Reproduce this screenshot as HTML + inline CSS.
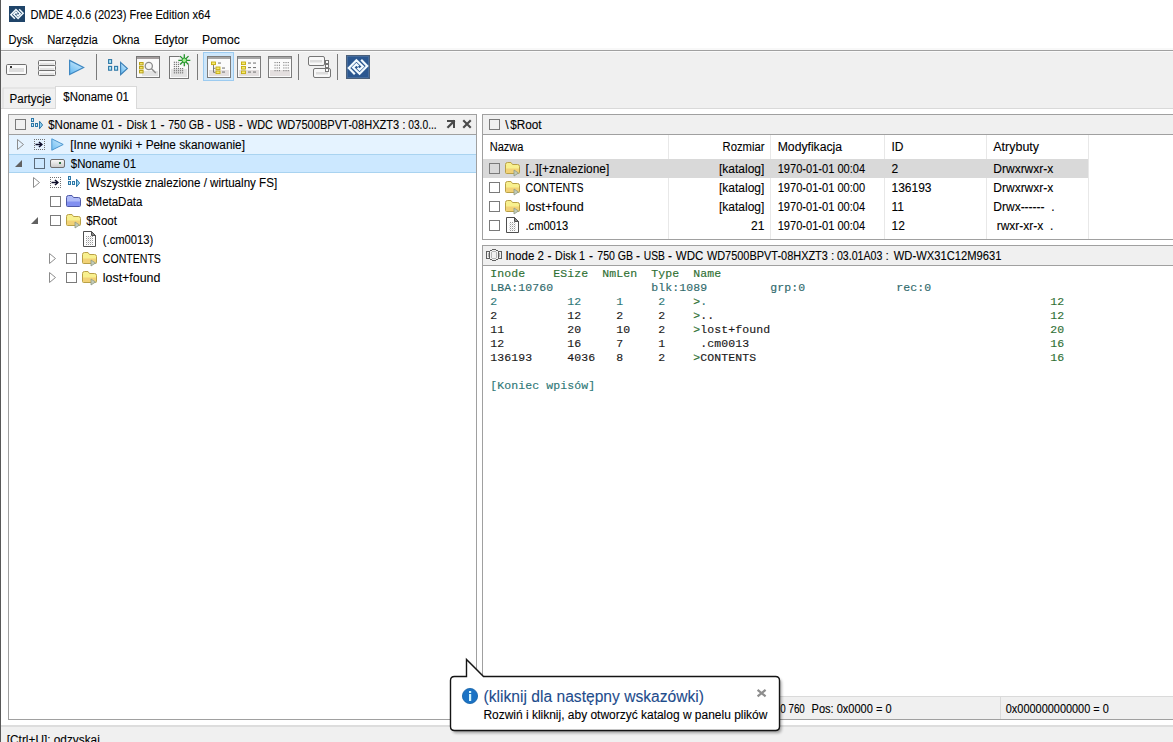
<!DOCTYPE html>
<html><head><meta charset="utf-8"><title>DMDE</title>
<style>html,body{margin:0;padding:0;background:#fff;overflow:hidden;width:1173px;height:742px}
</style></head>
<body><svg width="1173" height="742" viewBox="0 0 1173 742" style="display:block"><rect x="0" y="0" width="1173" height="742" fill="#ffffff" /><defs><pattern id="chk" x="0" y="0" width="2" height="2" patternUnits="userSpaceOnUse"><rect x="0" y="0" width="1" height="1" fill="#9a9a9a"/><rect x="1" y="1" width="1" height="1" fill="#dedede"/></pattern></defs><g transform="translate(9,6) scale(0.6666666666666666)"><rect x="0" y="0" width="24" height="24" fill="#1f4469"/><path d="M8.8,19.2 L2.8,13 L10.4,5.2 L16.9,11.5 L13.6,14.8 L11.5,12.7" fill="none" stroke="#f2faff" stroke-width="2.3"/><path d="M15.2,4.8 L21.2,11 L13.6,18.8 L7.1,12.5 L10.4,9.2 L12.5,11.3" fill="none" stroke="#f2faff" stroke-width="2.3"/></g><text x="30.5" y="19" font-family="Liberation Sans, sans-serif" font-size="12" fill="#000" stroke="#000" stroke-width="0.1" textLength="180" lengthAdjust="spacingAndGlyphs" >DMDE 4.0.6 (2023) Free Edition x64</text><text x="8.5" y="44" font-family="Liberation Sans, sans-serif" font-size="12" fill="#000" stroke="#000" stroke-width="0.1" textLength="24.5" lengthAdjust="spacingAndGlyphs" >Dysk</text><text x="47.3" y="44" font-family="Liberation Sans, sans-serif" font-size="12" fill="#000" stroke="#000" stroke-width="0.1" textLength="50.3" lengthAdjust="spacingAndGlyphs" >Narzędzia</text><text x="112.5" y="44" font-family="Liberation Sans, sans-serif" font-size="12" fill="#000" stroke="#000" stroke-width="0.1" textLength="27.1" lengthAdjust="spacingAndGlyphs" >Okna</text><text x="154.5" y="44" font-family="Liberation Sans, sans-serif" font-size="12" fill="#000" stroke="#000" stroke-width="0.1" textLength="33.5" lengthAdjust="spacingAndGlyphs" >Edytor</text><text x="202" y="44" font-family="Liberation Sans, sans-serif" font-size="12" fill="#000" stroke="#000" stroke-width="0.1" textLength="37.8" lengthAdjust="spacingAndGlyphs" >Pomoc</text><rect x="1" y="51" width="1173" height="58" fill="#f0f0f0" /><rect x="1" y="48" width="1173" height="2" fill="#f8f8f8" /><rect x="1" y="50" width="1172" height="1" fill="#a0a0a0" /><rect x="1" y="51" width="1172" height="1" fill="#fafafa" /><rect x="6.5" y="64.5" width="20" height="10" rx="1.2" fill="#fafafa" stroke="#6f6f6f" stroke-width="1"/><rect x="9" y="68" width="15" height="4" fill="#dddddd"/><rect x="10" y="66" width="2" height="2" fill="#333"/><rect x="38.5" y="60.5" width="17" height="5" rx="1" fill="#f7f7f7" stroke="#6f6f6f" stroke-width="1"/><rect x="40" y="63.0" width="14" height="2" fill="#e2e2e2"/><rect x="38.5" y="65.5" width="17" height="5" rx="1" fill="#f7f7f7" stroke="#6f6f6f" stroke-width="1"/><rect x="40" y="68.0" width="14" height="2" fill="#e2e2e2"/><rect x="38.5" y="70.5" width="17" height="5" rx="1" fill="#f7f7f7" stroke="#6f6f6f" stroke-width="1"/><rect x="40" y="73.0" width="14" height="2" fill="#e2e2e2"/><defs><linearGradient id="tbp" x1="0" y1="1" x2="0.6" y2="0"><stop offset="0" stop-color="#5ab4f0"/><stop offset="1" stop-color="#cdeafc"/></linearGradient></defs><path d="M69.6,60.4 L83.6,67.5 L69.6,74.6 Z" fill="url(#tbp)" stroke="#3f88c2" stroke-width="1.2"/><rect x="96" y="54" width="1" height="26" fill="#7a7a7a"/><rect x="197" y="54" width="1" height="26" fill="#7a7a7a"/><rect x="298" y="54" width="1" height="26" fill="#7a7a7a"/><rect x="337" y="54" width="1" height="26" fill="#7a7a7a"/><g fill="#b4eafa" stroke="#2f77a6" stroke-width="1.1"><rect x="108.6" y="59.6" width="3" height="3.8"/><rect x="108.6" y="66.4" width="3" height="3.8"/><rect x="114.6" y="66.4" width="3" height="3.8"/></g><defs><linearGradient id="tbp2" x1="0" y1="1" x2="0.6" y2="0"><stop offset="0" stop-color="#5ab4f0"/><stop offset="1" stop-color="#cdeafc"/></linearGradient></defs><path d="M120.6,62.3 L127.4,68.5 L120.6,74.7 Z" fill="url(#tbp2)" stroke="#3a7fb6" stroke-width="1.1"/><rect x="136.5" y="56.5" width="23" height="21" fill="#fafafa" stroke="#767676" stroke-width="1"/><rect x="137" y="57" width="22" height="2" fill="#a49e9e"/><rect x="142" y="71" width="16" height="5" fill="#e2e2e2"/><rect x="139.5" y="62.5" width="3.6" height="2.4" fill="#f3e46a" stroke="#b9a21a" stroke-width="1"/><rect x="139.5" y="66.5" width="3.6" height="2.4" fill="#f3e46a" stroke="#b9a21a" stroke-width="1"/><rect x="139.5" y="70.5" width="3.6" height="2.4" fill="#f3e46a" stroke="#b9a21a" stroke-width="1"/><circle cx="148.8" cy="66" r="3.6" fill="#f6f6f6" stroke="#8c8c8c" stroke-width="1.3"/><path d="M151.5,68.8 L155.8,73" stroke="#8c8c8c" stroke-width="1.5"/><rect x="169.5" y="56.5" width="19" height="22" fill="#fafafa" stroke="#767676" stroke-width="1"/><rect x="171" y="69" width="16" height="8" fill="#e2e2e2"/><rect x="173.8" y="61.7" width="1.2" height="1.2" fill="#7a7a7a"/><rect x="175.85000000000002" y="61.7" width="1.2" height="1.2" fill="#7a7a7a"/><rect x="177.9" y="61.7" width="1.2" height="1.2" fill="#7a7a7a"/><rect x="173.8" y="63.800000000000004" width="1.2" height="1.2" fill="#7a7a7a"/><rect x="175.85000000000002" y="63.800000000000004" width="1.2" height="1.2" fill="#7a7a7a"/><rect x="177.9" y="63.800000000000004" width="1.2" height="1.2" fill="#7a7a7a"/><rect x="173.8" y="65.9" width="1.2" height="1.2" fill="#7a7a7a"/><rect x="175.85000000000002" y="65.9" width="1.2" height="1.2" fill="#7a7a7a"/><rect x="177.9" y="65.9" width="1.2" height="1.2" fill="#7a7a7a"/><rect x="173.8" y="68.0" width="1.2" height="1.2" fill="#7a7a7a"/><rect x="175.85000000000002" y="68.0" width="1.2" height="1.2" fill="#7a7a7a"/><rect x="177.9" y="68.0" width="1.2" height="1.2" fill="#7a7a7a"/><rect x="179.95000000000002" y="68.0" width="1.2" height="1.2" fill="#7a7a7a"/><rect x="182.0" y="68.0" width="1.2" height="1.2" fill="#7a7a7a"/><rect x="173.8" y="70.10000000000001" width="1.2" height="1.2" fill="#7a7a7a"/><rect x="175.85000000000002" y="70.10000000000001" width="1.2" height="1.2" fill="#7a7a7a"/><rect x="177.9" y="70.10000000000001" width="1.2" height="1.2" fill="#7a7a7a"/><rect x="179.95000000000002" y="70.10000000000001" width="1.2" height="1.2" fill="#7a7a7a"/><rect x="182.0" y="70.10000000000001" width="1.2" height="1.2" fill="#7a7a7a"/><rect x="173.8" y="72.2" width="1.2" height="1.2" fill="#7a7a7a"/><rect x="175.85000000000002" y="72.2" width="1.2" height="1.2" fill="#7a7a7a"/><rect x="177.9" y="72.2" width="1.2" height="1.2" fill="#7a7a7a"/><rect x="179.95000000000002" y="72.2" width="1.2" height="1.2" fill="#7a7a7a"/><rect x="182.0" y="72.2" width="1.2" height="1.2" fill="#7a7a7a"/><circle cx="184.3" cy="60.3" r="6" fill="#f0f0f0"/><g stroke="#22922a" stroke-width="1.3"><path d="M184.3,54.3 L184.3,66.3 M178.3,60.3 L190.3,60.3 M180.1,56.1 L188.5,64.5 M188.5,56.1 L180.1,64.5"/></g><circle cx="184.3" cy="60.3" r="2.3" fill="#9ef08c" stroke="#22922a" stroke-width="0.9"/><rect x="203.5" y="52.5" width="30" height="28" fill="#cde6fa" stroke="#9ccbf0" stroke-width="1"/><rect x="207.5" y="56.5" width="23" height="21" fill="#fbfbfb" stroke="#7c7c7c" stroke-width="1"/><rect x="208" y="57" width="22" height="2" fill="#a6a6a6"/><rect x="209" y="70" width="20" height="6" fill="#e4dfdf"/><path d="M213.5,65 L213.5,72.3 L215.5,72.3 M213.5,68.3 L215.5,68.3" stroke="#606060" stroke-width="0.8" fill="none"/><rect x="211.5" y="62.0" width="4" height="2.6" fill="#f6ea6a" stroke="#c4aa10" stroke-width="0.9"/><rect x="216.0" y="67.0" width="4" height="2.6" fill="#f6ea6a" stroke="#c4aa10" stroke-width="0.9"/><rect x="216.0" y="71.0" width="4" height="2.6" fill="#f6ea6a" stroke="#c4aa10" stroke-width="0.9"/><rect x="218" y="62.5" width="3" height="1.1" fill="#7a7a7a"/><rect x="222" y="67.5" width="3" height="1.1" fill="#7a7a7a"/><rect x="222" y="71.5" width="3" height="1.1" fill="#7a7a7a"/><rect x="237.5" y="56.5" width="23" height="21" fill="#fbfbfb" stroke="#7c7c7c" stroke-width="1"/><rect x="238" y="57" width="22" height="2" fill="#a6a6a6"/><rect x="239" y="70" width="20" height="6" fill="#e4dfdf"/><rect x="241.5" y="62.0" width="4" height="2.6" fill="#f6ea6a" stroke="#c4aa10" stroke-width="0.9"/><rect x="248" y="62.5" width="3" height="1.1" fill="#7a7a7a"/><rect x="253" y="62.5" width="3" height="1.1" fill="#7a7a7a"/><rect x="241.5" y="66.5" width="4" height="2.6" fill="#f6ea6a" stroke="#c4aa10" stroke-width="0.9"/><rect x="248" y="67" width="3" height="1.1" fill="#7a7a7a"/><rect x="253" y="67" width="3" height="1.1" fill="#7a7a7a"/><rect x="241.5" y="71.0" width="4" height="2.6" fill="#f6ea6a" stroke="#c4aa10" stroke-width="0.9"/><rect x="248" y="71.5" width="3" height="1.1" fill="#7a7a7a"/><rect x="253" y="71.5" width="3" height="1.1" fill="#7a7a7a"/><rect x="268.5" y="56.5" width="23" height="21" fill="#fbfbfb" stroke="#7c7c7c" stroke-width="1"/><rect x="269" y="57" width="22" height="2" fill="#a6a6a6"/><rect x="270" y="70" width="20" height="6" fill="#e4dfdf"/><rect x="274.5" y="62.0" width="1.1" height="1.1" fill="#7f7f7f"/><rect x="276.7" y="62.0" width="1.1" height="1.1" fill="#7f7f7f"/><rect x="278.9" y="62.0" width="1.1" height="1.1" fill="#7f7f7f"/><rect x="283.3" y="62.0" width="1.1" height="1.1" fill="#7f7f7f"/><rect x="285.5" y="62.0" width="1.1" height="1.1" fill="#7f7f7f"/><rect x="287.7" y="62.0" width="1.1" height="1.1" fill="#7f7f7f"/><rect x="274.5" y="64.7" width="1.1" height="1.1" fill="#7f7f7f"/><rect x="276.7" y="64.7" width="1.1" height="1.1" fill="#7f7f7f"/><rect x="278.9" y="64.7" width="1.1" height="1.1" fill="#7f7f7f"/><rect x="283.3" y="64.7" width="1.1" height="1.1" fill="#7f7f7f"/><rect x="285.5" y="64.7" width="1.1" height="1.1" fill="#7f7f7f"/><rect x="287.7" y="64.7" width="1.1" height="1.1" fill="#7f7f7f"/><rect x="274.5" y="67.4" width="1.1" height="1.1" fill="#7f7f7f"/><rect x="276.7" y="67.4" width="1.1" height="1.1" fill="#7f7f7f"/><rect x="278.9" y="67.4" width="1.1" height="1.1" fill="#7f7f7f"/><rect x="283.3" y="67.4" width="1.1" height="1.1" fill="#7f7f7f"/><rect x="285.5" y="67.4" width="1.1" height="1.1" fill="#7f7f7f"/><rect x="287.7" y="67.4" width="1.1" height="1.1" fill="#7f7f7f"/><rect x="274.5" y="70.1" width="1.1" height="1.1" fill="#7f7f7f"/><rect x="276.7" y="70.1" width="1.1" height="1.1" fill="#7f7f7f"/><rect x="278.9" y="70.1" width="1.1" height="1.1" fill="#7f7f7f"/><rect x="283.3" y="70.1" width="1.1" height="1.1" fill="#7f7f7f"/><rect x="285.5" y="70.1" width="1.1" height="1.1" fill="#7f7f7f"/><rect x="287.7" y="70.1" width="1.1" height="1.1" fill="#7f7f7f"/><rect x="308.5" y="56.5" width="16" height="9" rx="1.5" fill="#f8f8f8" stroke="#767676" stroke-width="1"/><rect x="310" y="60" width="12" height="2.5" fill="#dcdcdc"/><rect x="313.5" y="68.5" width="17" height="9" rx="1.5" fill="#f8f8f8" stroke="#767676" stroke-width="1"/><rect x="316" y="72" width="12" height="2.5" fill="#dcdcdc"/><rect x="325.5" y="60.5" width="3" height="3" fill="#fff" stroke="#767676" stroke-width="1"/><rect x="325.5" y="64.5" width="3" height="3" fill="#fff" stroke="#767676" stroke-width="1"/><rect x="325.5" y="68.5" width="3" height="3" fill="#fff" stroke="#767676" stroke-width="1"/><g transform="translate(346,55) scale(1.0)"><rect x="0.5" y="0.5" width="23" height="23" fill="#2b5790" stroke="#4a5f7a" stroke-width="1"/><rect x="1.5" y="1.5" width="21" height="21" fill="none" stroke="#5f80a8" stroke-width="0.5"/><path d="M8.8,19.2 L2.8,13 L10.4,5.2 L16.9,11.5 L13.6,14.8 L11.5,12.7" fill="none" stroke="#f2faff" stroke-width="2.2"/><path d="M15.2,4.8 L21.2,11 L13.6,18.8 L7.1,12.5 L10.4,9.2 L12.5,11.3" fill="none" stroke="#f2faff" stroke-width="2.2"/></g><rect x="3" y="88" width="53" height="21" fill="#f0f0f0" stroke="#d9d9d9" stroke-width="1"/><rect x="1" y="108" width="1172" height="1" fill="#d9d9d9" /><rect x="55.5" y="86.5" width="81" height="24" fill="#ffffff" stroke="#d9d9d9" stroke-width="1"/><rect x="56" y="108" width="80" height="3" fill="#ffffff" /><text x="9.5" y="103" font-family="Liberation Sans, sans-serif" font-size="12" fill="#000" stroke="#000" stroke-width="0.1" textLength="41.8" lengthAdjust="spacingAndGlyphs" >Partycje</text><text x="63.3" y="101" font-family="Liberation Sans, sans-serif" font-size="12" fill="#000" stroke="#000" stroke-width="0.1" textLength="65.6" lengthAdjust="spacingAndGlyphs" >$Noname 01</text><rect x="1" y="109" width="1173" height="616" fill="#ffffff" /><rect x="8.5" y="114.5" width="468" height="605" fill="#ffffff" stroke="#a0a0a0" stroke-width="1"/><rect x="9" y="115" width="467" height="19" fill="#f0f0f0" /><rect x="9" y="134" width="467" height="1" fill="#a0a0a0" /><rect x="15.5" y="119.5" width="10" height="10" fill="none" stroke="#7a7a7a" stroke-width="1"/><g transform="translate(31,118) scale(1.0)" fill="#c6ecfb" stroke="#2f77a6" stroke-width="1"><rect x="0.5" y="0.5" width="2" height="3"/><rect x="0.5" y="5.5" width="2" height="3"/><rect x="4.5" y="5.5" width="2" height="3"/><path d="M8.5,3.2 L11.6,7 L8.5,10.8 Z" fill="#8fd0f0"/></g><text x="48.2" y="129" font-family="Liberation Sans, sans-serif" font-size="12" fill="#000" stroke="#000" stroke-width="0.1" textLength="65.9" lengthAdjust="spacingAndGlyphs" >$Noname 01</text><text x="118.1" y="129" font-family="Liberation Sans, sans-serif" font-size="12" fill="#000" stroke="#000" stroke-width="0.1" >-</text><text x="126.4" y="129" font-family="Liberation Sans, sans-serif" font-size="12" fill="#000" stroke="#000" stroke-width="0.1" textLength="29.9" lengthAdjust="spacingAndGlyphs" >Disk 1</text><text x="160.6" y="129" font-family="Liberation Sans, sans-serif" font-size="12" fill="#000" stroke="#000" stroke-width="0.1" >-</text><text x="168.2" y="129" font-family="Liberation Sans, sans-serif" font-size="12" fill="#000" stroke="#000" stroke-width="0.1" textLength="35.8" lengthAdjust="spacingAndGlyphs" >750 GB</text><text x="207.0" y="129" font-family="Liberation Sans, sans-serif" font-size="12" fill="#000" stroke="#000" stroke-width="0.1" >-</text><text x="215.0" y="129" font-family="Liberation Sans, sans-serif" font-size="12" fill="#000" stroke="#000" stroke-width="0.1" textLength="20.4" lengthAdjust="spacingAndGlyphs" >USB</text><text x="238.8" y="129" font-family="Liberation Sans, sans-serif" font-size="12" fill="#000" stroke="#000" stroke-width="0.1" >-</text><text x="246.9" y="129" font-family="Liberation Sans, sans-serif" font-size="12" fill="#000" stroke="#000" stroke-width="0.1" textLength="26.1" lengthAdjust="spacingAndGlyphs" >WDC</text><text x="276.9" y="129" font-family="Liberation Sans, sans-serif" font-size="12" fill="#000" stroke="#000" stroke-width="0.1" textLength="122.3" lengthAdjust="spacingAndGlyphs" >WD7500BPVT-08HXZT3</text><text x="402.2" y="129" font-family="Liberation Sans, sans-serif" font-size="12" fill="#000" stroke="#000" stroke-width="0.1" >:</text><text x="408.2" y="129" font-family="Liberation Sans, sans-serif" font-size="12" fill="#000" stroke="#000" stroke-width="0.1" textLength="28.5" lengthAdjust="spacingAndGlyphs" >03.0...</text><path d="M447,121 L455,121 M454,120 L454,128" fill="none" stroke="#4a4a4a" stroke-width="2"/><path d="M448.2,127 L453.8,121.4" fill="none" stroke="#4a4a4a" stroke-width="2.2" stroke-linecap="square"/><path d="M464,121 L470,127 M470,121 L464,127" fill="none" stroke="#4a4a4a" stroke-width="2.1" stroke-linecap="square"/><rect x="9" y="135" width="467" height="19" fill="#e5f3ff" /><rect x="9" y="154" width="467" height="19" fill="#cce8ff" /><rect x="9" y="154" width="467" height="1" fill="#a9d3f0" /><rect x="9" y="172" width="467" height="1" fill="#a9d3f0" /><path d="M17.5,139.5 L23.5,144.5 L17.5,149.5 Z" fill="none" stroke="#8c8c8c" stroke-width="1"/><path d="M34,139h1v1h-1zM34,149h1v1h-1zM34,139h1v1h-1zM44,139h1v1h-1zM36,139h1v1h-1zM36,149h1v1h-1zM34,141h1v1h-1zM44,141h1v1h-1zM38,139h1v1h-1zM38,149h1v1h-1zM34,143h1v1h-1zM44,143h1v1h-1zM40,139h1v1h-1zM40,149h1v1h-1zM34,145h1v1h-1zM44,145h1v1h-1zM42,139h1v1h-1zM42,149h1v1h-1zM34,147h1v1h-1zM44,147h1v1h-1zM44,139h1v1h-1zM44,149h1v1h-1zM34,149h1v1h-1zM44,149h1v1h-1z" fill="#707070"/><path d="M35.5,144.5 L41.5,144.5" stroke="#0c0c28" stroke-width="1.5"/><path d="M39,142 L41.8,144.5 L39,147" fill="none" stroke="#0c0c28" stroke-width="1.6"/><defs><linearGradient id="pg51_138" x1="0" y1="1" x2="1" y2="0"><stop offset="0" stop-color="#6cbcf2"/><stop offset="1" stop-color="#d6effd"/></linearGradient></defs><path d="M51.8,138.8 L63.2,144.5 L51.8,150.2 Z" fill="url(#pg51_138)" stroke="#4b96d0" stroke-width="1" stroke-linejoin="miter"/><text x="70.3" y="149" font-family="Liberation Sans, sans-serif" font-size="12" fill="#000" stroke="#000" stroke-width="0.1" textLength="174.7" lengthAdjust="spacingAndGlyphs" >[Inne wyniki + Pełne skanowanie]</text><path d="M22,160 L22,167 L15,167 Z" fill="#616161"/><rect x="34.5" y="158.5" width="10" height="10" fill="none" stroke="#5c6b7a" stroke-width="1"/><defs><linearGradient id="dg50_159" x1="0" y1="0" x2="0" y2="1"><stop offset="0" stop-color="#fbfbfb"/><stop offset="1" stop-color="#c9c9c9"/></linearGradient></defs><rect x="50.5" y="159.5" width="14" height="8" rx="1.5" fill="url(#dg50_159)" stroke="#6e6e6e" stroke-width="1"/><rect x="59" y="162" width="2" height="2" fill="#347444"/><text x="70.8" y="168" font-family="Liberation Sans, sans-serif" font-size="12" fill="#000" stroke="#000" stroke-width="0.1" textLength="65.2" lengthAdjust="spacingAndGlyphs" >$Noname 01</text><path d="M33.5,177.5 L39.5,182.5 L33.5,187.5 Z" fill="none" stroke="#8c8c8c" stroke-width="1"/><path d="M50,177h1v1h-1zM50,187h1v1h-1zM50,177h1v1h-1zM60,177h1v1h-1zM52,177h1v1h-1zM52,187h1v1h-1zM50,179h1v1h-1zM60,179h1v1h-1zM54,177h1v1h-1zM54,187h1v1h-1zM50,181h1v1h-1zM60,181h1v1h-1zM56,177h1v1h-1zM56,187h1v1h-1zM50,183h1v1h-1zM60,183h1v1h-1zM58,177h1v1h-1zM58,187h1v1h-1zM50,185h1v1h-1zM60,185h1v1h-1zM60,177h1v1h-1zM60,187h1v1h-1zM50,187h1v1h-1zM60,187h1v1h-1z" fill="#707070"/><path d="M51.5,182.5 L57.5,182.5" stroke="#0c0c28" stroke-width="1.5"/><path d="M55,180 L57.8,182.5 L55,185" fill="none" stroke="#0c0c28" stroke-width="1.6"/><g transform="translate(68,176) scale(1.0)" fill="#c6ecfb" stroke="#2f77a6" stroke-width="1"><rect x="0.5" y="0.5" width="2" height="3"/><rect x="0.5" y="5.5" width="2" height="3"/><rect x="4.5" y="5.5" width="2" height="3"/><path d="M8.5,3.2 L11.6,7 L8.5,10.8 Z" fill="#8fd0f0"/></g><text x="86.2" y="187" font-family="Liberation Sans, sans-serif" font-size="12" fill="#000" stroke="#000" stroke-width="0.1" textLength="191" lengthAdjust="spacingAndGlyphs" >[Wszystkie znalezione / wirtualny FS]</text><rect x="50.5" y="196.5" width="10" height="10" fill="none" stroke="#7a7a7a" stroke-width="1"/><path d="M66.5,197.5 Q66.5,195.5 68.5,195.5 L72,195.5 L73.5,197.5 L78.5,197.5 Q80.5,197.5 80.5,199.5 L80.5,205.5 Q80.5,206.5 79.5,206.5 L67.5,206.5 Q66.5,206.5 66.5,205.5 Z" fill="#b0bcf8" stroke="#4e58a8" stroke-width="1"/><rect x="67" y="201.5" width="13" height="4.5" fill="#8290f0"/><text x="86.2" y="206" font-family="Liberation Sans, sans-serif" font-size="12" fill="#000" stroke="#000" stroke-width="0.1" textLength="56.2" lengthAdjust="spacingAndGlyphs" >$MetaData</text><path d="M38,217 L38,224 L31,224 Z" fill="#616161"/><rect x="50.5" y="215.5" width="10" height="10" fill="none" stroke="#7a7a7a" stroke-width="1"/><path d="M66.5,216.5 Q66.5,214.5 68.5,214.5 L72,214.5 L73.5,216.5 L78.5,216.5 Q80.5,216.5 80.5,218.5 L80.5,224.5 Q80.5,225.5 79.5,225.5 L67.5,225.5 Q66.5,225.5 66.5,224.5 Z" fill="#f8f08e" stroke="#b9a046" stroke-width="1"/><rect x="67" y="220.5" width="13" height="4.5" fill="#f2d276"/><path d="M75,222 L79.5,225 L75,228 Z" fill="#c4ccb8" stroke="#8f9a86" stroke-width="0.8"/><text x="86.2" y="225" font-family="Liberation Sans, sans-serif" font-size="12" fill="#000" stroke="#000" stroke-width="0.1" textLength="30.8" lengthAdjust="spacingAndGlyphs" >$Root</text><path d="M83.5,231.5 L91.5,231.5 L95.5,235.5 L95.5,246.5 L83.5,246.5 Z" fill="#fdfdfd" stroke="#4e4e4e" stroke-width="1"/><path d="M91.5,231.5 L91.5,235.5 L95.5,235.5 Z" fill="#8a8a8a" stroke="#4e4e4e" stroke-width="1"/><rect x="86" y="236" width="7" height="9" fill="url(#chk)"/><text x="102.8" y="244" font-family="Liberation Sans, sans-serif" font-size="12" fill="#000" stroke="#000" stroke-width="0.1" textLength="50.5" lengthAdjust="spacingAndGlyphs" >(.cm0013)</text><path d="M49.5,253.5 L55.5,258.5 L49.5,263.5 Z" fill="none" stroke="#8c8c8c" stroke-width="1"/><rect x="66.5" y="253.5" width="10" height="10" fill="none" stroke="#7a7a7a" stroke-width="1"/><path d="M82.5,254.5 Q82.5,252.5 84.5,252.5 L88,252.5 L89.5,254.5 L94.5,254.5 Q96.5,254.5 96.5,256.5 L96.5,262.5 Q96.5,263.5 95.5,263.5 L83.5,263.5 Q82.5,263.5 82.5,262.5 Z" fill="#f8f08e" stroke="#b9a046" stroke-width="1"/><rect x="83" y="258.5" width="13" height="4.5" fill="#f2d276"/><path d="M91,260 L95.5,263 L91,266 Z" fill="#c4ccb8" stroke="#8f9a86" stroke-width="0.8"/><text x="102.8" y="263" font-family="Liberation Sans, sans-serif" font-size="12" fill="#000" stroke="#000" stroke-width="0.1" textLength="58.1" lengthAdjust="spacingAndGlyphs" >CONTENTS</text><path d="M49.5,272.5 L55.5,277.5 L49.5,282.5 Z" fill="none" stroke="#8c8c8c" stroke-width="1"/><rect x="66.5" y="272.5" width="10" height="10" fill="none" stroke="#7a7a7a" stroke-width="1"/><path d="M82.5,273.5 Q82.5,271.5 84.5,271.5 L88,271.5 L89.5,273.5 L94.5,273.5 Q96.5,273.5 96.5,275.5 L96.5,281.5 Q96.5,282.5 95.5,282.5 L83.5,282.5 Q82.5,282.5 82.5,281.5 Z" fill="#f8f08e" stroke="#b9a046" stroke-width="1"/><rect x="83" y="277.5" width="13" height="4.5" fill="#f2d276"/><path d="M91,279 L95.5,282 L91,285 Z" fill="#c4ccb8" stroke="#8f9a86" stroke-width="0.8"/><text x="102.8" y="282" font-family="Liberation Sans, sans-serif" font-size="12" fill="#000" stroke="#000" stroke-width="0.1" textLength="57.6" lengthAdjust="spacingAndGlyphs" >lost+found</text><rect x="482.5" y="114.5" width="693" height="125" fill="#ffffff" stroke="#a0a0a0" stroke-width="1"/><rect x="483" y="115" width="1173" height="19" fill="#f0f0f0" /><rect x="483" y="134" width="690" height="1" fill="#a0a0a0" /><rect x="489.5" y="119.5" width="10" height="10" fill="none" stroke="#7a7a7a" stroke-width="1"/><text x="505.2" y="129" font-family="Liberation Sans, sans-serif" font-size="12" fill="#000" stroke="#000" stroke-width="0.1" >\</text><text x="510.2" y="129" font-family="Liberation Sans, sans-serif" font-size="12" fill="#000" stroke="#000" stroke-width="0.1" textLength="31.4" lengthAdjust="spacingAndGlyphs" >$Root</text><rect x="668" y="135" width="1" height="104" fill="#e8e8e8" /><rect x="770" y="135" width="1" height="104" fill="#e8e8e8" /><rect x="884" y="135" width="1" height="104" fill="#e8e8e8" /><rect x="986" y="135" width="1" height="104" fill="#e8e8e8" /><rect x="1088" y="135" width="1" height="104" fill="#e8e8e8" /><text x="489.7" y="151" font-family="Liberation Sans, sans-serif" font-size="12" fill="#000" stroke="#000" stroke-width="0.1" textLength="33.8" lengthAdjust="spacingAndGlyphs" >Nazwa</text><text x="764.4" y="151" font-family="Liberation Sans, sans-serif" font-size="12" fill="#000" stroke="#000" stroke-width="0.1" textLength="41.9" lengthAdjust="spacingAndGlyphs" text-anchor="end" >Rozmiar</text><text x="777.7" y="151" font-family="Liberation Sans, sans-serif" font-size="12" fill="#000" stroke="#000" stroke-width="0.1" textLength="64.4" lengthAdjust="spacingAndGlyphs" >Modyfikacja</text><text x="891.5" y="151" font-family="Liberation Sans, sans-serif" font-size="12" fill="#000" stroke="#000" stroke-width="0.1" >ID</text><text x="993.3" y="151" font-family="Liberation Sans, sans-serif" font-size="12" fill="#000" stroke="#000" stroke-width="0.1" textLength="45.7" lengthAdjust="spacingAndGlyphs" >Atrybuty</text><rect x="483" y="159" width="605" height="19" fill="#d9d9d9" /><rect x="489.5" y="163.5" width="10" height="10" fill="none" stroke="#7a7a7a" stroke-width="1"/><path d="M505.5,164.5 Q505.5,162.5 507.5,162.5 L511,162.5 L512.5,164.5 L517.5,164.5 Q519.5,164.5 519.5,166.5 L519.5,172.5 Q519.5,173.5 518.5,173.5 L506.5,173.5 Q505.5,173.5 505.5,172.5 Z" fill="#f8f08e" stroke="#b9a046" stroke-width="1"/><rect x="506" y="168.5" width="13" height="4.5" fill="#f2d276"/><path d="M514,170 L518.5,173 L514,176 Z" fill="#c4ccb8" stroke="#8f9a86" stroke-width="0.8"/><text x="525.5" y="173" font-family="Liberation Sans, sans-serif" font-size="12" fill="#000" stroke="#000" stroke-width="0.1" textLength="83.7" lengthAdjust="spacingAndGlyphs" >[..][+znalezione]</text><text x="764.4" y="173" font-family="Liberation Sans, sans-serif" font-size="12" fill="#000" stroke="#000" stroke-width="0.1" text-anchor="end" >[katalog]</text><text x="777.7" y="173" font-family="Liberation Sans, sans-serif" font-size="12" fill="#000" stroke="#000" stroke-width="0.1" textLength="87.4" lengthAdjust="spacingAndGlyphs" >1970-01-01 00:04</text><text x="891.5" y="173" font-family="Liberation Sans, sans-serif" font-size="12" fill="#000" stroke="#000" stroke-width="0.1" >2</text><text x="993.3" y="173" font-family="Liberation Sans, sans-serif" font-size="12" fill="#000" stroke="#000" stroke-width="0.1" xml:space="preserve">Drwxrwxr-x</text><rect x="489.5" y="182.5" width="10" height="10" fill="none" stroke="#7a7a7a" stroke-width="1"/><path d="M505.5,183.5 Q505.5,181.5 507.5,181.5 L511,181.5 L512.5,183.5 L517.5,183.5 Q519.5,183.5 519.5,185.5 L519.5,191.5 Q519.5,192.5 518.5,192.5 L506.5,192.5 Q505.5,192.5 505.5,191.5 Z" fill="#f8f08e" stroke="#b9a046" stroke-width="1"/><rect x="506" y="187.5" width="13" height="4.5" fill="#f2d276"/><path d="M514,189 L518.5,192 L514,195 Z" fill="#c4ccb8" stroke="#8f9a86" stroke-width="0.8"/><text x="525.5" y="192" font-family="Liberation Sans, sans-serif" font-size="12" fill="#000" stroke="#000" stroke-width="0.1" textLength="58.1" lengthAdjust="spacingAndGlyphs" >CONTENTS</text><text x="764.4" y="192" font-family="Liberation Sans, sans-serif" font-size="12" fill="#000" stroke="#000" stroke-width="0.1" text-anchor="end" >[katalog]</text><text x="777.7" y="192" font-family="Liberation Sans, sans-serif" font-size="12" fill="#000" stroke="#000" stroke-width="0.1" textLength="87.4" lengthAdjust="spacingAndGlyphs" >1970-01-01 00:00</text><text x="891.5" y="192" font-family="Liberation Sans, sans-serif" font-size="12" fill="#000" stroke="#000" stroke-width="0.1" >136193</text><text x="993.3" y="192" font-family="Liberation Sans, sans-serif" font-size="12" fill="#000" stroke="#000" stroke-width="0.1" xml:space="preserve">Drwxrwxr-x</text><rect x="489.5" y="201.5" width="10" height="10" fill="none" stroke="#7a7a7a" stroke-width="1"/><path d="M505.5,202.5 Q505.5,200.5 507.5,200.5 L511,200.5 L512.5,202.5 L517.5,202.5 Q519.5,202.5 519.5,204.5 L519.5,210.5 Q519.5,211.5 518.5,211.5 L506.5,211.5 Q505.5,211.5 505.5,210.5 Z" fill="#f8f08e" stroke="#b9a046" stroke-width="1"/><rect x="506" y="206.5" width="13" height="4.5" fill="#f2d276"/><path d="M514,208 L518.5,211 L514,214 Z" fill="#c4ccb8" stroke="#8f9a86" stroke-width="0.8"/><text x="525.5" y="211" font-family="Liberation Sans, sans-serif" font-size="12" fill="#000" stroke="#000" stroke-width="0.1" textLength="58.1" lengthAdjust="spacingAndGlyphs" >lost+found</text><text x="764.4" y="211" font-family="Liberation Sans, sans-serif" font-size="12" fill="#000" stroke="#000" stroke-width="0.1" text-anchor="end" >[katalog]</text><text x="777.7" y="211" font-family="Liberation Sans, sans-serif" font-size="12" fill="#000" stroke="#000" stroke-width="0.1" textLength="87.4" lengthAdjust="spacingAndGlyphs" >1970-01-01 00:04</text><text x="891.5" y="211" font-family="Liberation Sans, sans-serif" font-size="12" fill="#000" stroke="#000" stroke-width="0.1" >11</text><text x="993.3" y="211" font-family="Liberation Sans, sans-serif" font-size="12" fill="#000" stroke="#000" stroke-width="0.1" xml:space="preserve">Drwx------  .</text><rect x="489.5" y="220.5" width="10" height="10" fill="none" stroke="#7a7a7a" stroke-width="1"/><path d="M506.5,217.5 L514.5,217.5 L518.5,221.5 L518.5,232.5 L506.5,232.5 Z" fill="#fdfdfd" stroke="#4e4e4e" stroke-width="1"/><path d="M514.5,217.5 L514.5,221.5 L518.5,221.5 Z" fill="#8a8a8a" stroke="#4e4e4e" stroke-width="1"/><rect x="509" y="222" width="7" height="9" fill="url(#chk)"/><text x="525.5" y="230" font-family="Liberation Sans, sans-serif" font-size="12" fill="#000" stroke="#000" stroke-width="0.1" textLength="42.7" lengthAdjust="spacingAndGlyphs" >.cm0013</text><text x="764.4" y="230" font-family="Liberation Sans, sans-serif" font-size="12" fill="#000" stroke="#000" stroke-width="0.1" text-anchor="end" >21</text><text x="777.7" y="230" font-family="Liberation Sans, sans-serif" font-size="12" fill="#000" stroke="#000" stroke-width="0.1" textLength="87.4" lengthAdjust="spacingAndGlyphs" >1970-01-01 00:04</text><text x="891.5" y="230" font-family="Liberation Sans, sans-serif" font-size="12" fill="#000" stroke="#000" stroke-width="0.1" >12</text><text x="993.3" y="230" font-family="Liberation Sans, sans-serif" font-size="12" fill="#000" stroke="#000" stroke-width="0.1" xml:space="preserve"> rwxr-xr-x  .</text><rect x="482.5" y="245.5" width="693" height="474" fill="#ffffff" stroke="#a0a0a0" stroke-width="1"/><rect x="483" y="246" width="1173" height="19" fill="#f0f0f0" /><rect x="483" y="265" width="690" height="1" fill="#a0a0a0" /><g fill="#5e5e5e"><rect x="486" y="251" width="4" height="1"/><rect x="486" y="258" width="4" height="1"/><rect x="486" y="251" width="1" height="8"/><rect x="489" y="251" width="1" height="8"/><rect x="498" y="251" width="4" height="1"/><rect x="498" y="258" width="4" height="1"/><rect x="498" y="251" width="1" height="8"/><rect x="501" y="251" width="1" height="8"/><rect x="492" y="249" width="4" height="1"/><rect x="492" y="260" width="4" height="1"/><rect x="490" y="250" width="2" height="1"/><rect x="496" y="250" width="2" height="1"/><rect x="490" y="259" width="2" height="1"/><rect x="496" y="259" width="2" height="1"/></g><g fill="#b4b4b4"><rect x="492" y="251" width="4" height="1"/><rect x="492" y="258" width="4" height="1"/><rect x="491" y="252" width="1" height="6"/><rect x="496" y="252" width="1" height="6"/><rect x="488" y="253" width="1" height="4"/><rect x="499" y="253" width="1" height="4"/></g><text x="505.4" y="260" font-family="Liberation Sans, sans-serif" font-size="12" fill="#000" stroke="#000" stroke-width="0.1" textLength="38.6" lengthAdjust="spacingAndGlyphs" >Inode 2</text><text x="547.4" y="260" font-family="Liberation Sans, sans-serif" font-size="12" fill="#000" stroke="#000" stroke-width="0.1" >-</text><text x="555.1" y="260" font-family="Liberation Sans, sans-serif" font-size="12" fill="#000" stroke="#000" stroke-width="0.1" textLength="30.0" lengthAdjust="spacingAndGlyphs" >Disk 1</text><text x="588.9" y="260" font-family="Liberation Sans, sans-serif" font-size="12" fill="#000" stroke="#000" stroke-width="0.1" >-</text><text x="597.3" y="260" font-family="Liberation Sans, sans-serif" font-size="12" fill="#000" stroke="#000" stroke-width="0.1" textLength="35.8" lengthAdjust="spacingAndGlyphs" >750 GB</text><text x="636.1" y="260" font-family="Liberation Sans, sans-serif" font-size="12" fill="#000" stroke="#000" stroke-width="0.1" >-</text><text x="643.8" y="260" font-family="Liberation Sans, sans-serif" font-size="12" fill="#000" stroke="#000" stroke-width="0.1" textLength="21.2" lengthAdjust="spacingAndGlyphs" >USB</text><text x="668.1" y="260" font-family="Liberation Sans, sans-serif" font-size="12" fill="#000" stroke="#000" stroke-width="0.1" >-</text><text x="675.8" y="260" font-family="Liberation Sans, sans-serif" font-size="12" fill="#000" stroke="#000" stroke-width="0.1" textLength="27.6" lengthAdjust="spacingAndGlyphs" >WDC</text><text x="706.9" y="260" font-family="Liberation Sans, sans-serif" font-size="12" fill="#000" stroke="#000" stroke-width="0.1" textLength="121.0" lengthAdjust="spacingAndGlyphs" >WD7500BPVT-08HXZT3</text><text x="830.9" y="260" font-family="Liberation Sans, sans-serif" font-size="12" fill="#000" stroke="#000" stroke-width="0.1" >:</text><text x="836.9" y="260" font-family="Liberation Sans, sans-serif" font-size="12" fill="#000" stroke="#000" stroke-width="0.1" textLength="45.5" lengthAdjust="spacingAndGlyphs" >03.01A03</text><text x="885.6" y="260" font-family="Liberation Sans, sans-serif" font-size="12" fill="#000" stroke="#000" stroke-width="0.1" >:</text><text x="893.8" y="260" font-family="Liberation Sans, sans-serif" font-size="12" fill="#000" stroke="#000" stroke-width="0.1" textLength="107.6" lengthAdjust="spacingAndGlyphs" >WD-WX31C12M9631</text><text x="490.3" y="277" font-family="Liberation Mono, monospace" font-size="11.5" fill="#2f7034" stroke="#2f7034" stroke-width="0.15" letter-spacing="0.1">Inode</text><text x="553.3" y="277" font-family="Liberation Mono, monospace" font-size="11.5" fill="#2f7034" stroke="#2f7034" stroke-width="0.15" letter-spacing="0.1">ESize</text><text x="602.3" y="277" font-family="Liberation Mono, monospace" font-size="11.5" fill="#2f7034" stroke="#2f7034" stroke-width="0.15" letter-spacing="0.1">NmLen</text><text x="651.3" y="277" font-family="Liberation Mono, monospace" font-size="11.5" fill="#2f7034" stroke="#2f7034" stroke-width="0.15" letter-spacing="0.1">Type</text><text x="693.3" y="277" font-family="Liberation Mono, monospace" font-size="11.5" fill="#2f7034" stroke="#2f7034" stroke-width="0.15" letter-spacing="0.1">Name</text><text x="490.3" y="291" font-family="Liberation Mono, monospace" font-size="11.5" fill="#2f6a6c" stroke="#2f6a6c" stroke-width="0.15" letter-spacing="0.1">LBA:10760</text><text x="651.3" y="291" font-family="Liberation Mono, monospace" font-size="11.5" fill="#2f6a6c" stroke="#2f6a6c" stroke-width="0.15" letter-spacing="0.1">blk:1089</text><text x="770.3" y="291" font-family="Liberation Mono, monospace" font-size="11.5" fill="#2f6a6c" stroke="#2f6a6c" stroke-width="0.15" letter-spacing="0.1">grp:0</text><text x="896.3" y="291" font-family="Liberation Mono, monospace" font-size="11.5" fill="#2f6a6c" stroke="#2f6a6c" stroke-width="0.15" letter-spacing="0.1">rec:0</text><text x="490.3" y="305" font-family="Liberation Mono, monospace" font-size="11.5" fill="#2f7878" stroke="#2f7878" stroke-width="0.15" letter-spacing="0.1">2</text><text x="567.3" y="305" font-family="Liberation Mono, monospace" font-size="11.5" fill="#2f7878" stroke="#2f7878" stroke-width="0.15" letter-spacing="0.1">12</text><text x="616.3" y="305" font-family="Liberation Mono, monospace" font-size="11.5" fill="#2f7878" stroke="#2f7878" stroke-width="0.15" letter-spacing="0.1">1</text><text x="658.3" y="305" font-family="Liberation Mono, monospace" font-size="11.5" fill="#2f7878" stroke="#2f7878" stroke-width="0.15" letter-spacing="0.1">2</text><text x="693.3" y="305" font-family="Liberation Mono, monospace" font-size="11.5" fill="#2f7034" stroke="#2f7034" stroke-width="0.15" letter-spacing="0.1">&gt;</text><text x="700.3" y="305" font-family="Liberation Mono, monospace" font-size="11.5" fill="#2f7878" stroke="#2f7878" stroke-width="0.15" letter-spacing="0.1">.</text><text x="1050.3" y="305" font-family="Liberation Mono, monospace" font-size="11.5" fill="#2f7034" stroke="#2f7034" stroke-width="0.15" letter-spacing="0.1">12</text><text x="490.3" y="319" font-family="Liberation Mono, monospace" font-size="11.5" fill="#1a1a1a" stroke="#1a1a1a" stroke-width="0.15" letter-spacing="0.1">2</text><text x="567.3" y="319" font-family="Liberation Mono, monospace" font-size="11.5" fill="#1a1a1a" stroke="#1a1a1a" stroke-width="0.15" letter-spacing="0.1">12</text><text x="616.3" y="319" font-family="Liberation Mono, monospace" font-size="11.5" fill="#1a1a1a" stroke="#1a1a1a" stroke-width="0.15" letter-spacing="0.1">2</text><text x="658.3" y="319" font-family="Liberation Mono, monospace" font-size="11.5" fill="#1a1a1a" stroke="#1a1a1a" stroke-width="0.15" letter-spacing="0.1">2</text><text x="693.3" y="319" font-family="Liberation Mono, monospace" font-size="11.5" fill="#2f7034" stroke="#2f7034" stroke-width="0.15" letter-spacing="0.1">&gt;</text><text x="700.3" y="319" font-family="Liberation Mono, monospace" font-size="11.5" fill="#1a1a1a" stroke="#1a1a1a" stroke-width="0.15" letter-spacing="0.1">..</text><text x="1050.3" y="319" font-family="Liberation Mono, monospace" font-size="11.5" fill="#2f7034" stroke="#2f7034" stroke-width="0.15" letter-spacing="0.1">12</text><text x="490.3" y="333" font-family="Liberation Mono, monospace" font-size="11.5" fill="#1a1a1a" stroke="#1a1a1a" stroke-width="0.15" letter-spacing="0.1">11</text><text x="567.3" y="333" font-family="Liberation Mono, monospace" font-size="11.5" fill="#1a1a1a" stroke="#1a1a1a" stroke-width="0.15" letter-spacing="0.1">20</text><text x="616.3" y="333" font-family="Liberation Mono, monospace" font-size="11.5" fill="#1a1a1a" stroke="#1a1a1a" stroke-width="0.15" letter-spacing="0.1">10</text><text x="658.3" y="333" font-family="Liberation Mono, monospace" font-size="11.5" fill="#1a1a1a" stroke="#1a1a1a" stroke-width="0.15" letter-spacing="0.1">2</text><text x="693.3" y="333" font-family="Liberation Mono, monospace" font-size="11.5" fill="#2f7034" stroke="#2f7034" stroke-width="0.15" letter-spacing="0.1">&gt;</text><text x="700.3" y="333" font-family="Liberation Mono, monospace" font-size="11.5" fill="#1a1a1a" stroke="#1a1a1a" stroke-width="0.15" letter-spacing="0.1">lost+found</text><text x="1050.3" y="333" font-family="Liberation Mono, monospace" font-size="11.5" fill="#2f7034" stroke="#2f7034" stroke-width="0.15" letter-spacing="0.1">20</text><text x="490.3" y="347" font-family="Liberation Mono, monospace" font-size="11.5" fill="#1a1a1a" stroke="#1a1a1a" stroke-width="0.15" letter-spacing="0.1">12</text><text x="567.3" y="347" font-family="Liberation Mono, monospace" font-size="11.5" fill="#1a1a1a" stroke="#1a1a1a" stroke-width="0.15" letter-spacing="0.1">16</text><text x="616.3" y="347" font-family="Liberation Mono, monospace" font-size="11.5" fill="#1a1a1a" stroke="#1a1a1a" stroke-width="0.15" letter-spacing="0.1">7</text><text x="658.3" y="347" font-family="Liberation Mono, monospace" font-size="11.5" fill="#1a1a1a" stroke="#1a1a1a" stroke-width="0.15" letter-spacing="0.1">1</text><text x="700.3" y="347" font-family="Liberation Mono, monospace" font-size="11.5" fill="#1a1a1a" stroke="#1a1a1a" stroke-width="0.15" letter-spacing="0.1">.cm0013</text><text x="1050.3" y="347" font-family="Liberation Mono, monospace" font-size="11.5" fill="#2f7034" stroke="#2f7034" stroke-width="0.15" letter-spacing="0.1">16</text><text x="490.3" y="361" font-family="Liberation Mono, monospace" font-size="11.5" fill="#1a1a1a" stroke="#1a1a1a" stroke-width="0.15" letter-spacing="0.1">136193</text><text x="567.3" y="361" font-family="Liberation Mono, monospace" font-size="11.5" fill="#1a1a1a" stroke="#1a1a1a" stroke-width="0.15" letter-spacing="0.1">4036</text><text x="616.3" y="361" font-family="Liberation Mono, monospace" font-size="11.5" fill="#1a1a1a" stroke="#1a1a1a" stroke-width="0.15" letter-spacing="0.1">8</text><text x="658.3" y="361" font-family="Liberation Mono, monospace" font-size="11.5" fill="#1a1a1a" stroke="#1a1a1a" stroke-width="0.15" letter-spacing="0.1">2</text><text x="693.3" y="361" font-family="Liberation Mono, monospace" font-size="11.5" fill="#2f7034" stroke="#2f7034" stroke-width="0.15" letter-spacing="0.1">&gt;</text><text x="700.3" y="361" font-family="Liberation Mono, monospace" font-size="11.5" fill="#1a1a1a" stroke="#1a1a1a" stroke-width="0.15" letter-spacing="0.1">CONTENTS</text><text x="1050.3" y="361" font-family="Liberation Mono, monospace" font-size="11.5" fill="#2f7034" stroke="#2f7034" stroke-width="0.15" letter-spacing="0.1">16</text><text x="490.3" y="389" font-family="Liberation Mono, monospace" font-size="11.5" fill="#2f7878" stroke="#2f7878" stroke-width="0.15" letter-spacing="0.1">[Koniec&#160;wpisów]</text><rect x="483" y="697" width="1173" height="22" fill="#f0f0f0" /><rect x="483" y="696" width="690" height="1" fill="#dadada" /><rect x="483" y="719" width="690" height="1" fill="#a0a0a0" /><rect x="1000" y="697" width="1" height="22" fill="#dadada" /><text x="804.8" y="713" font-family="Liberation Sans, sans-serif" font-size="12" fill="#000" stroke="#000" stroke-width="0.1" textLength="54" lengthAdjust="spacingAndGlyphs" text-anchor="end" >LBA: 10 760</text><text x="811.6" y="713" font-family="Liberation Sans, sans-serif" font-size="12" fill="#000" stroke="#000" stroke-width="0.1" textLength="80" lengthAdjust="spacingAndGlyphs" >Pos: 0x0000 = 0</text><text x="1005.8" y="713" font-family="Liberation Sans, sans-serif" font-size="12" fill="#000" stroke="#000" stroke-width="0.1" textLength="103" lengthAdjust="spacingAndGlyphs" >0x000000000000 = 0</text><rect x="1" y="725" width="1173" height="17" fill="#f0f0f0" /><rect x="1" y="725" width="1173" height="2" fill="#dddddd" /><text x="6.8" y="744" font-family="Liberation Sans, sans-serif" font-size="12" fill="#000" stroke="#000" stroke-width="0.1" textLength="93" lengthAdjust="spacingAndGlyphs" >[Ctrl+U]: odzyskaj</text><rect x="0" y="0" width="1" height="742" fill="#585858" /><defs><filter id="bs" x="-10%" y="-10%" width="130%" height="140%"><feGaussianBlur stdDeviation="1.5"/></filter></defs><path d="M454.5,676.5 L466.5,676.5 L466.5,659.5 L483.5,676.5 L775.5,676.5 Q779.5,676.5 779.5,680.5 L779.5,726.5 Q779.5,730.5 775.5,730.5 L454.5,730.5 Q450.5,730.5 450.5,726.5 L450.5,680.5 Q450.5,676.5 454.5,676.5 Z" transform="translate(2,2.5)" fill="#000" opacity="0.35" filter="url(#bs)"/><path d="M454.5,676.5 L466.5,676.5 L466.5,659.5 L483.5,676.5 L775.5,676.5 Q779.5,676.5 779.5,680.5 L779.5,726.5 Q779.5,730.5 775.5,730.5 L454.5,730.5 Q450.5,730.5 450.5,726.5 L450.5,680.5 Q450.5,676.5 454.5,676.5 Z" fill="#ffffff" stroke="#141414" stroke-width="1.4"/><circle cx="470" cy="696" r="7.6" fill="#1b72c4" stroke="#1060a6" stroke-width="0.8"/><rect x="469" y="694" width="2.2" height="7" fill="#d2f6ff"/><rect x="469" y="691" width="2.2" height="2" fill="#d2f6ff"/><text x="483.6" y="702" font-family="Liberation Sans, sans-serif" font-size="16" fill="#1e4c8c" stroke="#1e4c8c" stroke-width="0.1" textLength="220.4" lengthAdjust="spacingAndGlyphs" >(kliknij dla następny wskazówki)</text><path d="M757.6,689.8 L765.6,696.4 M765.6,689.8 L757.6,696.4" stroke="#8e8e8e" stroke-width="2.2"/><text x="483.4" y="719" font-family="Liberation Sans, sans-serif" font-size="12" fill="#000" stroke="#000" stroke-width="0.1" textLength="284" lengthAdjust="spacingAndGlyphs" >Rozwiń i kliknij, aby otworzyć katalog w panelu plików</text></svg></body></html>
